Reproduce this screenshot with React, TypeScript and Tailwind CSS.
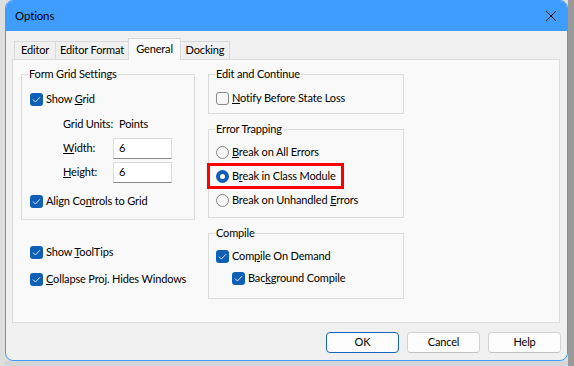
import type { ReactNode } from "react";

function CheckBox({ checked }: { checked: boolean }) {
  if (!checked) {
    return (
      <span className="h-[13px] w-[13px] shrink-0 rounded-[3px] border border-[#8a8a8a] bg-[#f6f6f6]" />
    );
  }
  return (
    <span className="flex h-[13px] w-[13px] shrink-0 items-center justify-center rounded-[3px] bg-[#0f5fb6]">
      <svg width="9" height="7" viewBox="0 0 9 7">
        <path d="M1 3.6 L3.4 6 L8 1.2" fill="none" stroke="#d8e6f6" strokeWidth="1" />
      </svg>
    </span>
  );
}

function Radio({ checked }: { checked: boolean }) {
  if (!checked) {
    return (
      <span className="h-[13px] w-[13px] shrink-0 rounded-full border border-[#8a8a8a] bg-[#f6f6f6]" />
    );
  }
  return (
    <span className="flex h-[13px] w-[13px] shrink-0 items-center justify-center rounded-full bg-[#0f5fb6]">
      <span className="h-[5px] w-[5px] rounded-full bg-white" />
    </span>
  );
}

function Group({ title, className, children }: { title: string; className?: string; children: ReactNode }) {
  return (
    <fieldset className={"border border-[#dcdcdc] " + (className ?? "")}>
      <legend className="ml-[6px] px-[1px] leading-4">{title}</legend>
      {children}
    </fieldset>
  );
}

function Row({ className, children }: { className?: string; children: ReactNode }) {
  return (
    <div className={"flex h-4 items-center gap-[3px] whitespace-nowrap " + (className ?? "")}>{children}</div>
  );
}

function Tab({ label, active, width }: { label: string; active?: boolean; width: string }) {
  if (active) {
    return (
      <div
        className={`relative z-10 -mb-px -ml-px flex h-[22px] items-center justify-center whitespace-nowrap border border-b-0 border-[#d9d9d9] bg-[#f9f9f9] pb-[1px] ${width}`}
      >
        {label}
      </div>
    );
  }
  return (
    <div
      className={`-ml-px flex h-[18px] items-center justify-center whitespace-nowrap border border-b-0 border-[#d9d9d9] bg-[#f0f0f0] first:ml-0 ${width}`}
    >
      {label}
    </div>
  );
}

function Button({ label, primary }: { label: string; primary?: boolean }) {
  return (
    <div
      className={
        "flex h-[21px] w-[73px] items-center justify-center rounded-[4px] border bg-[#fdfdfd] " +
        (primary ? "border-[#1464c0]" : "border-[#d3d3d3] border-b-[#c2c2c2]")
      }
    >
      {label}
    </div>
  );
}

function NumberBox({ value }: { value: string }) {
  return (
    <div className="flex h-[21px] w-[59px] items-center border border-[#dadada] border-b-[#8a8a8a] bg-white pl-[5px]">
      {value}
    </div>
  );
}

export default function App() {
  return (
    <div className="flex h-[366px] w-[574px] bg-[#dedede] font-['Lato',sans-serif] text-[11px] tracking-[-0.15px] text-black">
      <div className="w-[5px]" />
      <div className="flex w-[563px] flex-col">
        <div className="flex h-[361px] flex-col overflow-hidden rounded-lg border border-[#3f9dff] bg-[#f0f0f0]">
          {/* title bar */}
          <div className="flex h-[30px] shrink-0 items-center justify-between bg-[#3f9dff] pl-[9px] pr-[8px]">
            <span className="text-[11.5px]">Options</span>
            <svg width="12" height="12" viewBox="0 0 12 12" className="mr-[2px]">
              <path d="M1 1 L11 11 M11 1 L1 11" stroke="#111" strokeWidth="1" />
            </svg>
          </div>

          <div className="flex flex-1 flex-col px-[6px] pb-[7px] pt-[7px]">
            {/* tabs */}
            <div className="flex h-[21px] items-end pl-[2px]">
              <Tab label="Editor" width="w-[42px]" />
              <Tab label="Editor Format" width="w-[74px]" />
              <Tab label="General" width="w-[53px]" active />
              <Tab label="Docking" width="w-[50px]" />
            </div>

            {/* panel */}
            <div className="flex h-[264px] w-[548px] gap-[13px] border border-[#dcdcdc] bg-[#f9f9f9] pl-[8px] pt-[6px]">
              <div className="flex w-[174px] flex-col">
                <Group title="Form Grid Settings">
                  <div className="pb-[10px] pl-[8px]">
                    <Row className="mt-[9px]">
                      <CheckBox checked />
                      <span>
                        Show <u>G</u>rid
                      </span>
                    </Row>
                    <div className="mt-[9px] flex h-4 items-center gap-[6px] pl-[33px]">
                      <span>Grid Units:</span>
                      <span>Points</span>
                    </div>
                    <div className="mt-[6px] flex h-[21px] items-center pl-[33px]">
                      <span className="w-[50px]">
                        <u>W</u>idth:
                      </span>
                      <NumberBox value="6" />
                    </div>
                    <div className="mt-[3px] flex h-[21px] items-center pl-[33px]">
                      <span className="w-[50px]">
                        <u>H</u>eight:
                      </span>
                      <NumberBox value="6" />
                    </div>
                    <Row className="mt-[10px]">
                      <CheckBox checked />
                      <span>
                        Align Co<u>n</u>trols to Grid
                      </span>
                    </Row>
                  </div>
                </Group>

                <div className="pl-[9px]">
                  <Row className="mt-[24px]">
                    <CheckBox checked />
                    <span>
                      Show <u>T</u>oolTips
                    </span>
                  </Row>
                  <Row className="mt-[11px]">
                    <CheckBox checked />
                    <span>
                      <u>C</u>ollapse Proj. Hides Windows
                    </span>
                  </Row>
                </div>
              </div>

              <div className="flex w-[196px] flex-col">
                <Group title="Edit and Continue">
                  <div className="pb-[7px] pl-[7px]">
                    <Row className="mt-[8px]">
                      <CheckBox checked={false} />
                      <span>
                        <u>N</u>otify Before State Loss
                      </span>
                    </Row>
                  </div>
                </Group>

                <Group title="Error Trapping" className="mt-[7px]">
                  <div className="pb-[9px] pl-[7px]">
                    <Row className="mt-[7px]">
                      <Radio checked={false} />
                      <span>
                        <u>B</u>reak on All Errors
                      </span>
                    </Row>
                    <Row className="relative mt-[8px]">
                      <Radio checked />
                      <span>
                        B<u>r</u>eak in Class Module
                      </span>
                      <span className="pointer-events-none absolute -left-[9px] -top-[5px] h-[26px] w-[137px] border-[3px] border-[#ff0000]" />
                    </Row>
                    <Row className="mt-[8px]">
                      <Radio checked={false} />
                      <span>
                        Break on Unhandled <u>E</u>rrors
                      </span>
                    </Row>
                  </div>
                </Group>

                <Group title="Compile" className="mt-[7px]">
                  <div className="pb-[12px] pl-[7px]">
                    <Row className="mt-[7px]">
                      <CheckBox checked />
                      <span>
                        Com<u>p</u>ile On Demand
                      </span>
                    </Row>
                    <Row className="mt-[6px] pl-[16px]">
                      <CheckBox checked />
                      <span>
                        Bac<u>k</u>ground Compile
                      </span>
                    </Row>
                  </div>
                </Group>
              </div>
            </div>

            {/* buttons */}
            <div className="mt-[9px] flex justify-end gap-[8px]">
              <Button label="OK" primary />
              <Button label="Cancel" />
              <Button label="Help" />
            </div>
          </div>
        </div>
        <div className="flex-1 bg-[#d6d6d6]" />
      </div>
      <div className="w-[6px] bg-[#9a9a9a]" />
    </div>
  );
}
